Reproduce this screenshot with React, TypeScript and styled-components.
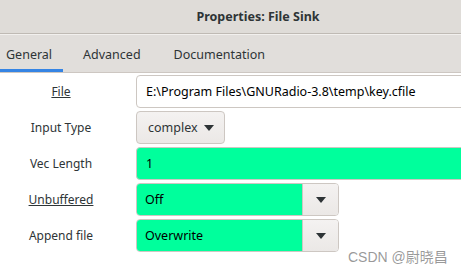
import React from 'react';
import styled, { createGlobalStyle } from 'styled-components';

const GlobalStyle = createGlobalStyle`
    html, body {
        margin: 0;
        padding: 0;
        background: #ffffff;
        overflow: hidden;
    }
    body {
        font-family: 'Noto Sans', 'Open Sans', sans-serif;
    }
`;

const Caret = () => (
    <svg width="10" height="6" viewBox="0 0 10 6">
        <path d="M0 0 L10 0 L5 6 Z" fill="#2e3436" />
    </svg>
);

export default function App() {
    return (
        <>
            <GlobalStyle />
            <Viewport>
                <Window>
                    <TitleBar>Properties: File Sink</TitleBar>
                    <Tabs>
                        <Tab $active>General</Tab>
                        <Tab>Advanced</Tab>
                        <Tab>Documentation</Tab>
                    </Tabs>
                    <Form>
                        <Label $underline>File</Label>
                        <Entry>E:\Program Files\GNURadio-3.8\temp\key.cfile</Entry>

                        <Label>Input Type</Label>
                        <div>
                            <TypeButton>
                                complex <Caret />
                            </TypeButton>
                        </div>

                        <Label>Vec Length</Label>
                        <Entry $green>1</Entry>

                        <Label $underline>Unbuffered</Label>
                        <Combo>
                            <ComboEntry>Off</ComboEntry>
                            <ComboButton>
                                <Caret />
                            </ComboButton>
                        </Combo>

                        <Label>Append file</Label>
                        <Combo>
                            <ComboEntry>Overwrite</ComboEntry>
                            <ComboButton>
                                <Caret />
                            </ComboButton>
                        </Combo>
                    </Form>
                </Window>
                <Watermark>CSDN @尉晓昌</Watermark>
            </Viewport>
        </>
    );
}

const Viewport = styled.div`
    position: relative;
    width: 461px;
    height: 269px;
    overflow: hidden;
`;

const Window = styled.div`
    width: 516px;
    height: 269px;
    background: #ffffff;
`;

const TitleBar = styled.div`
    height: 33px;
    display: flex;
    align-items: center;
    justify-content: center;
    background: #dfdcd8;
    border-bottom: 1px solid #bfbab4;
    color: #2e3436;
    font-size: 12.5px;
    font-weight: 700;
`;

const Tabs = styled.div`
    display: flex;
    height: 39px;
    box-sizing: border-box;
    background: #e1dedb;
    border-top: 1px solid #f2f0ee;
    border-bottom: 1px solid #cdc7c2;
`;

const Tab = styled.div<{ $active?: boolean }>`
    display: flex;
    align-items: center;
    padding: 2px 11px 0 6px;
    margin-right: 16px;
    font-size: 12.5px;
    color: #2e3436;
    box-shadow: ${(p) => (p.$active ? 'inset 0 -3px 0 #3584e4' : 'none')};
    &:first-child {
        padding-right: 11px;
        margin-right: 14px;
    }
`;

const Form = styled.div`
    display: grid;
    grid-template-columns: 122px 1fr;
    grid-auto-rows: 33px;
    column-gap: 14px;
    row-gap: 3px;
    padding-top: 2px;
    padding-right: 12px;
`;

const Label = styled.div<{ $underline?: boolean }>`
    display: flex;
    align-items: center;
    justify-content: center;
    font-size: 12px;
    color: #2e3436;
    text-decoration: ${(p) => (p.$underline ? 'underline' : 'none')};
`;

const Entry = styled.div<{ $green?: boolean }>`
    display: flex;
    align-items: center;
    padding-left: 9px;
    box-sizing: border-box;
    border: 1px solid #cdc7c2;
    border-radius: 4px;
    background: ${(p) => (p.$green ? '#00ff9c' : '#ffffff')};
    font-size: 12.5px;
    color: #000000;
`;

const TypeButton = styled.div`
    display: inline-flex;
    align-items: center;
    gap: 6px;
    height: 33px;
    width: 89px;
    box-sizing: border-box;
    padding-left: 11px;
    border: 1px solid #cdc7c2;
    border-radius: 4px;
    background: linear-gradient(#f4f2f1, #ebe8e6);
    font-size: 12.5px;
    color: #2e3436;
`;

const Combo = styled.div`
    display: flex;
    width: 203px;
    height: 33px;
    box-sizing: border-box;
    border: 1px solid #cdc7c2;
    border-radius: 4px;
    overflow: hidden;
`;

const ComboEntry = styled.div`
    flex: 1;
    display: flex;
    align-items: center;
    padding-left: 8px;
    background: #00ff9c;
    font-size: 12.5px;
    color: #000000;
`;

const ComboButton = styled.div`
    width: 35px;
    display: flex;
    align-items: center;
    justify-content: center;
    border-left: 1px solid #cdc7c2;
    background: linear-gradient(#f4f2f1, #ebe8e6);
`;

const Watermark = styled.div`
    position: absolute;
    left: 348px;
    top: 246px;
    font-size: 14px;
    color: rgba(120, 120, 120, 0.75);
    font-family: 'Liberation Sans', 'Noto Sans CJK SC', sans-serif;
`;
